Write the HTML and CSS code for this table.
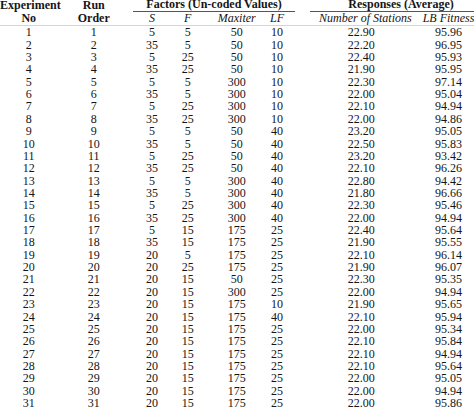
FILE: index.html
```html
<!DOCTYPE html>
<html>
<head>
<meta charset="utf-8">
<link rel="stylesheet" href="styles.css">
</head>
<body>
<table class="doe">
<colgroup>
<col class="w1"><col class="w2"><col class="w3"><col class="w4"><col class="w5"><col class="w6"><col class="w7"><col class="w8">
</colgroup>
<thead>
<tr class="h1">
<th rowspan="2" class="c1 stack">Experiment<br>No</th>
<th rowspan="2" class="c2 stack">Run<br>Order</th>
<th colspan="4" class="group"><div class="grp grp-f">Factors (Un-coded Values)</div></th>
<th colspan="2" class="group"><div class="grp grp-r">Responses (Average)</div></th>
</tr>
<tr class="h2">
<th class="c3 it">S</th>
<th class="c4 it">F</th>
<th class="c5 it">Maxiter</th>
<th class="c6 it">LF</th>
<th class="c7 it">Number of Stations</th>
<th class="c8 it">LB Fitness</th>
</tr>
</thead>
<tbody>
<tr><td class="c1">1</td><td class="c2">1</td><td class="c3">5</td><td class="c4">5</td><td class="c5">50</td><td class="c6">10</td><td class="c7">22.90</td><td class="c8">95.96</td></tr>
<tr><td class="c1">2</td><td class="c2">2</td><td class="c3">35</td><td class="c4">5</td><td class="c5">50</td><td class="c6">10</td><td class="c7">22.20</td><td class="c8">96.95</td></tr>
<tr><td class="c1">3</td><td class="c2">3</td><td class="c3">5</td><td class="c4">25</td><td class="c5">50</td><td class="c6">10</td><td class="c7">22.40</td><td class="c8">95.93</td></tr>
<tr><td class="c1">4</td><td class="c2">4</td><td class="c3">35</td><td class="c4">25</td><td class="c5">50</td><td class="c6">10</td><td class="c7">21.90</td><td class="c8">95.95</td></tr>
<tr><td class="c1">5</td><td class="c2">5</td><td class="c3">5</td><td class="c4">5</td><td class="c5">300</td><td class="c6">10</td><td class="c7">22.30</td><td class="c8">97.14</td></tr>
<tr><td class="c1">6</td><td class="c2">6</td><td class="c3">35</td><td class="c4">5</td><td class="c5">300</td><td class="c6">10</td><td class="c7">22.00</td><td class="c8">95.04</td></tr>
<tr><td class="c1">7</td><td class="c2">7</td><td class="c3">5</td><td class="c4">25</td><td class="c5">300</td><td class="c6">10</td><td class="c7">22.10</td><td class="c8">94.94</td></tr>
<tr><td class="c1">8</td><td class="c2">8</td><td class="c3">35</td><td class="c4">25</td><td class="c5">300</td><td class="c6">10</td><td class="c7">22.00</td><td class="c8">94.86</td></tr>
<tr><td class="c1">9</td><td class="c2">9</td><td class="c3">5</td><td class="c4">5</td><td class="c5">50</td><td class="c6">40</td><td class="c7">23.20</td><td class="c8">95.05</td></tr>
<tr><td class="c1">10</td><td class="c2">10</td><td class="c3">35</td><td class="c4">5</td><td class="c5">50</td><td class="c6">40</td><td class="c7">22.50</td><td class="c8">95.83</td></tr>
<tr><td class="c1">11</td><td class="c2">11</td><td class="c3">5</td><td class="c4">25</td><td class="c5">50</td><td class="c6">40</td><td class="c7">23.20</td><td class="c8">93.42</td></tr>
<tr><td class="c1">12</td><td class="c2">12</td><td class="c3">35</td><td class="c4">25</td><td class="c5">50</td><td class="c6">40</td><td class="c7">22.10</td><td class="c8">96.26</td></tr>
<tr><td class="c1">13</td><td class="c2">13</td><td class="c3">5</td><td class="c4">5</td><td class="c5">300</td><td class="c6">40</td><td class="c7">22.80</td><td class="c8">94.42</td></tr>
<tr><td class="c1">14</td><td class="c2">14</td><td class="c3">35</td><td class="c4">5</td><td class="c5">300</td><td class="c6">40</td><td class="c7">21.80</td><td class="c8">96.66</td></tr>
<tr><td class="c1">15</td><td class="c2">15</td><td class="c3">5</td><td class="c4">25</td><td class="c5">300</td><td class="c6">40</td><td class="c7">22.30</td><td class="c8">95.46</td></tr>
<tr><td class="c1">16</td><td class="c2">16</td><td class="c3">35</td><td class="c4">25</td><td class="c5">300</td><td class="c6">40</td><td class="c7">22.00</td><td class="c8">94.94</td></tr>
<tr><td class="c1">17</td><td class="c2">17</td><td class="c3">5</td><td class="c4">15</td><td class="c5">175</td><td class="c6">25</td><td class="c7">22.40</td><td class="c8">95.64</td></tr>
<tr><td class="c1">18</td><td class="c2">18</td><td class="c3">35</td><td class="c4">15</td><td class="c5">175</td><td class="c6">25</td><td class="c7">21.90</td><td class="c8">95.55</td></tr>
<tr><td class="c1">19</td><td class="c2">19</td><td class="c3">20</td><td class="c4">5</td><td class="c5">175</td><td class="c6">25</td><td class="c7">22.10</td><td class="c8">96.14</td></tr>
<tr><td class="c1">20</td><td class="c2">20</td><td class="c3">20</td><td class="c4">25</td><td class="c5">175</td><td class="c6">25</td><td class="c7">21.90</td><td class="c8">96.07</td></tr>
<tr><td class="c1">21</td><td class="c2">21</td><td class="c3">20</td><td class="c4">15</td><td class="c5">50</td><td class="c6">25</td><td class="c7">22.30</td><td class="c8">95.35</td></tr>
<tr><td class="c1">22</td><td class="c2">22</td><td class="c3">20</td><td class="c4">15</td><td class="c5">300</td><td class="c6">25</td><td class="c7">22.00</td><td class="c8">94.94</td></tr>
<tr><td class="c1">23</td><td class="c2">23</td><td class="c3">20</td><td class="c4">15</td><td class="c5">175</td><td class="c6">10</td><td class="c7">21.90</td><td class="c8">95.65</td></tr>
<tr><td class="c1">24</td><td class="c2">24</td><td class="c3">20</td><td class="c4">15</td><td class="c5">175</td><td class="c6">40</td><td class="c7">22.10</td><td class="c8">95.94</td></tr>
<tr><td class="c1">25</td><td class="c2">25</td><td class="c3">20</td><td class="c4">15</td><td class="c5">175</td><td class="c6">25</td><td class="c7">22.00</td><td class="c8">95.34</td></tr>
<tr><td class="c1">26</td><td class="c2">26</td><td class="c3">20</td><td class="c4">15</td><td class="c5">175</td><td class="c6">25</td><td class="c7">22.10</td><td class="c8">95.84</td></tr>
<tr><td class="c1">27</td><td class="c2">27</td><td class="c3">20</td><td class="c4">15</td><td class="c5">175</td><td class="c6">25</td><td class="c7">22.10</td><td class="c8">94.94</td></tr>
<tr><td class="c1">28</td><td class="c2">28</td><td class="c3">20</td><td class="c4">15</td><td class="c5">175</td><td class="c6">25</td><td class="c7">22.10</td><td class="c8">95.64</td></tr>
<tr><td class="c1">29</td><td class="c2">29</td><td class="c3">20</td><td class="c4">15</td><td class="c5">175</td><td class="c6">25</td><td class="c7">22.00</td><td class="c8">95.05</td></tr>
<tr><td class="c1">30</td><td class="c2">30</td><td class="c3">20</td><td class="c4">15</td><td class="c5">175</td><td class="c6">25</td><td class="c7">22.00</td><td class="c8">94.94</td></tr>
<tr><td class="c1">31</td><td class="c2">31</td><td class="c3">20</td><td class="c4">15</td><td class="c5">175</td><td class="c6">25</td><td class="c7">22.00</td><td class="c8">95.86</td></tr>
</tbody>
</table>
</body>
</html>
```

FILE: styles.css
```css
html, body {
  margin: 0;
  padding: 0;
  background: #ffffff;
  overflow: hidden;
}
body {
  font-family: "Liberation Serif", "Times New Roman", serif;
  color: #151515;
}
.doe {
  table-layout: fixed;
  border-collapse: collapse;
  width: 492px;
  margin-top: -3px;
}
.w1 { width: 61px; }
.w2 { width: 62px; }
.w3 { width: 47px; }
.w4 { width: 42px; }
.w5 { width: 45px; }
.w6 { width: 62px; }
.w7 { width: 86px; }
.w8 { width: 87px; }

.doe th, .doe td {
  padding: 0;
  text-align: center;
  white-space: nowrap;
  overflow: visible;
}
.doe th {
  font-size: 12px;
  font-weight: bold;
  line-height: 12.7px;
}
.doe th.it {
  font-style: italic;
  font-weight: normal;
  font-size: 12px;
}
.doe .h1 { height: 15px; }
.doe .h1 .group { vertical-align: top; }
.doe .h2 { height: 13.8px; }
.doe .h2 th { vertical-align: middle; border-bottom: 1px solid #d4d4d4; }
.doe .stack { vertical-align: top; padding-top: 2px; border-bottom: 1px solid #d4d4d4; }

.grp {
  border-bottom: 1px solid #555;
  line-height: 14px;
}
.grp-f { margin: 0 24px 0 10px; }
.grp-r { margin: 0 0 0 -9px; }

.doe td {
  font-size: 12px;
  height: 12.367px;
  line-height: 12.367px;
}
.c1 { padding-right: 3.5px !important; }
.c2 { padding-left: 3.5px !important; }
.c3 { padding-left: 11px !important; }
.c4 { padding-right: 6.5px !important; }
.c5 { padding-left: 4.5px !important; }
.c6 { padding-right: 22px !important; }
.c7 { padding-right: 1.5px !important; }
```
